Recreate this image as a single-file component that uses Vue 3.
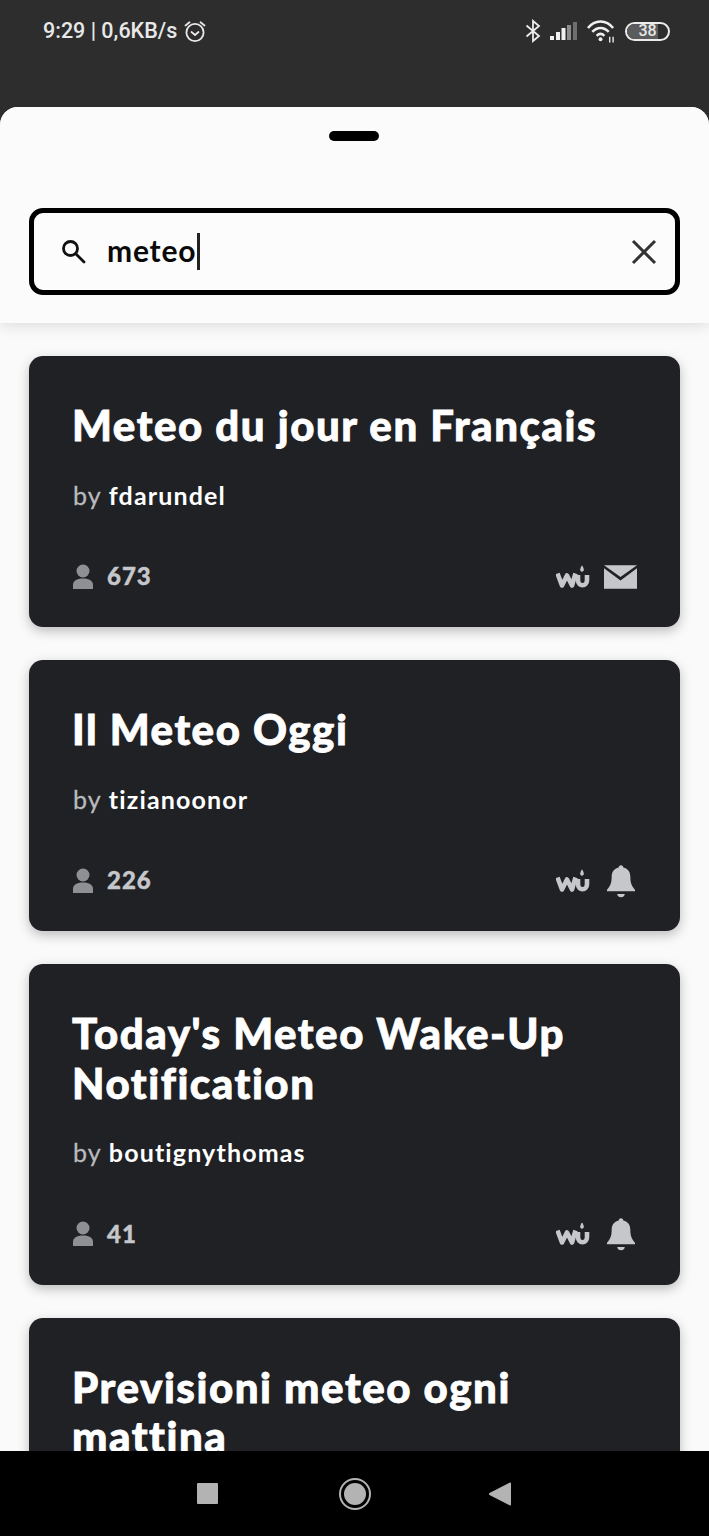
<script setup>
const cards = [
  { title: "Meteo du jour en Français", author: "fdarundel", users: 673, icon: "mail" },
  { title: "Il Meteo Oggi", author: "tizianoonor", users: 226, icon: "bell" },
  { title: "Today's Meteo Wake-Up Notification", author: "boutignythomas", users: 41, icon: "bell" },
  { title: "Previsioni meteo ogni mattina", author: "", users: 0, icon: "bell" }
]
</script>

<template>
  <div class="screen">
    <div class="status">
      <div class="status-left">
        <span>9:29 | 0,6KB/s</span>
        <svg class="alarm" width="24" height="24" viewBox="0 0 24 24" fill="none" stroke="#e8e8e8" stroke-width="1.8" stroke-linecap="round">
          <circle cx="12" cy="13.5" r="8.6" />
          <path d="M8.5 13l3.5 3 3.5-3" />
          <path d="M2.5 6.5l4-3.2M21.5 6.5l-4-3.2" />
        </svg>
      </div>
      <div class="status-right">
        <svg width="16" height="24" viewBox="0 0 16 24" fill="none" stroke="#ececec" stroke-width="1.8">
          <path d="M1.5 6.5L14 17l-6 5V2l6 5L1.5 17.5" />
        </svg>
        <svg class="signal" width="27" height="20" viewBox="0 0 27 20">
          <rect x="0" y="15" width="4" height="4" fill="#f0f0f0" />
          <rect x="6" y="11" width="4" height="8" fill="#f0f0f0" />
          <rect x="11.500" y="7" width="4" height="12" fill="#f0f0f0" />
          <rect x="17" y="4" width="4" height="15" fill="#8c8c8c" />
          <rect x="23" y="1" width="4" height="18" fill="#6e6e6e" />
        </svg>
        <svg class="wifi" width="29" height="24" viewBox="0 0 30 24" fill="none" stroke="#f0f0f0" stroke-width="2.6">
          <path d="M1 9C8-0 20-0 27 9" />
          <path d="M5.5 13C10.5 7.5 17.5 7.5 22.5 13" />
          <path d="M10 17c2.500-2.500 5.500-2.500 8 0" />
          <circle cx="14" cy="20.500" r="2" fill="#f0f0f0" stroke="none" />
          <path d="M23.500 18v6M27 18v6" stroke-width="1.400" />
        </svg>
        <div class="battery">
          <div class="battery-fill"></div>
          <span>38</span>
        </div>
      </div>
    </div>

    <div class="sheet">
      <div class="header">
        <div class="handle"></div>
        <div class="search">
          <svg width="28" height="28" viewBox="0 0 28 28" fill="none" stroke="#111" stroke-width="2.800" stroke-linecap="round">
            <circle cx="11.500" cy="10.500" r="7" />
            <path d="M17 16l8 8" />
          </svg>
          <span class="query">meteo</span>
          <span class="caret"></span>
          <svg class="clear" width="28" height="28" viewBox="0 0 28 28" fill="none" stroke="#333" stroke-width="3">
            <path d="M3 3l22 22M25 3L3 25" />
          </svg>
        </div>
      </div>

      <div class="list">
        <div v-for="card in cards" :key="card.title" class="card">
          <h2 class="title">{{ card.title }}</h2>
          <p class="by">by <b>{{ card.author }}</b></p>
          <div class="footer">
            <svg class="person" width="22" height="26" viewBox="0 0 22 26" fill="#8f9094">
              <circle cx="11" cy="7" r="6.500" />
              <path d="M1 25v-4c0-4 3.500-6.500 10-6.500s10 2.500 10 6.500v4z" />
            </svg>
            <span class="users">{{ card.users }}</span>
            <svg class="wu" width="34" height="24" viewBox="0 0 34 24" fill="none" stroke="#c6c7cb" stroke-width="4.600" stroke-linejoin="round">
              <path d="M1.500 8.500l4.500 12 5-10 5 10 3.500-12" />
              <path d="M22 10v5c0 7 9 7 9 0v-5" />
              <path d="M26 1.500c-1.500 3-1.500 4 0 4.500 1.500-.500 1.500-1.500 0-4.500z" stroke-width="1.500" fill="#c6c7cb" />
            </svg>
            <svg v-if="card.icon === 'mail'" class="kind mail" width="33" height="24" viewBox="0 0 34 24" fill="#c6c7cb">
              <path d="M0 1h34L17 13z" transform="translate(0 -1)" />
              <path d="M0 3v21h34V3L17 15.500z" />
            </svg>
            <svg v-else class="kind" width="28" height="34" viewBox="0 0 30 36" fill="#c6c7cb">
              <path d="M15 1c1.500 0 2.500 1 2.500 2.500 5 1 7.500 5 7.500 10 0 6 1 9.500 5 14v1.500H0v-1.500c4-4.500 5-8 5-14 0-5 2.500-9 7.500-10C12.500 2 13.500 1 15 1z" />
              <path d="M11 32h8c0 2-1.500 3.500-4 3.500s-4-1.500-4-3.500z" />
            </svg>
          </div>
        </div>
      </div>
    </div>

    <div class="nav">
      <div class="nav-square"></div>
      <div class="nav-home"><div></div></div>
      <svg class="nav-back" width="22" height="24" viewBox="0 0 22 24" fill="#b3b3b3">
        <path d="M21 .500c.500 0 1 .500 1 1v21c0 .500-.500 1-1 1L.500 13c-.700-.500-.700-1.500 0-2z" />
      </svg>
    </div>
  </div>
</template>

<style>
body {
  margin: 0;
}
</style>

<style scoped>
.screen {
  width: 709px;
  height: 1536px;
  display: flex;
  flex-direction: column;
  overflow: hidden;
  background: #2d2d2d;
  font-family: Lato, "Open Sans", sans-serif;
}

.status {
  height: 107px;
  flex-shrink: 0;
  box-sizing: border-box;
  padding: 17px 39px 0 43px;
  display: flex;
  justify-content: space-between;
  align-items: flex-start;
  color: #e8e8e8;
  font-family: Roboto, sans-serif;
  font-weight: 500;
  font-size: 21.500px;
  line-height: 28px;
}

.status-left,
.status-right {
  display: flex;
  align-items: center;
  height: 28px;
}

.alarm {
  margin-left: 6px;
}

.signal {
  margin-left: 9px;
}

.wifi {
  margin-left: 10px;
}

.battery {
  position: relative;
  margin-left: 9px;
  box-sizing: border-box;
  width: 45px;
  height: 19px;
  border: 2px solid #ececec;
  border-radius: 10px;
  overflow: hidden;
  display: flex;
  align-items: center;
  justify-content: center;
  font-size: 16px;
}

.battery span {
  position: relative;
}

.battery-fill {
  position: absolute;
  inset: 0 10px 0 0;
  background: #5c5c5c;
}

.sheet {
  flex: 1;
  min-height: 0;
  display: flex;
  flex-direction: column;
  background: #fafafa;
  border-radius: 18px 18px 0 0;
  overflow: hidden;
}

.header {
  height: 216px;
  flex-shrink: 0;
  box-sizing: border-box;
  padding: 24px 29px 0;
  background: #fbfbfb;
  box-shadow: 0 2px 14px rgba(0, 0, 0, 0.13);
  position: relative;
}

.handle {
  width: 50px;
  height: 10px;
  margin: 0 0 67px 300px;
  border-radius: 5px;
  background: #000;
}

.search {
  height: 87px;
  box-sizing: border-box;
  border: 5px solid #000;
  border-radius: 14px;
  display: flex;
  align-items: center;
  padding: 0 17px 0 25px;
  background: #fcfcfc;
}

.query {
  margin-left: 20px;
  margin-top: -4px;
  font-size: 30px;
  letter-spacing: 0.8px;
  font-weight: 700;
  color: #0a0a0a;
}

.caret {
  width: 3px;
  height: 37px;
  margin-left: 1px;
  background: #222;
}

.clear {
  margin-left: auto;
}

.list {
  flex: 1;
  min-height: 0;
  overflow: hidden;
  padding: 33px 29px 0;
  display: flex;
  flex-direction: column;
  gap: 33px;
}

.card {
  flex-shrink: 0;
  padding: 45px 44px 34.500px;
  background: #1f2125;
  border-radius: 14px;
  box-shadow: 0 4px 12px rgba(0, 0, 0, 0.25);
}

.title {
  margin: 0 0 0 -1px;
  font-size: 42px;
  line-height: 49.500px;
  font-weight: 900;
  letter-spacing: 1.550px;
  -webkit-text-stroke: 0.8px #fff;
  color: #fff;
}

.by {
  margin: 27px 0 0;
  font-size: 25px;
  line-height: 34px;
  font-weight: 400;
  letter-spacing: 1.150px;
  -webkit-text-stroke: 0.3px #b9babd;
  color: #b9babd;
}

.by b {
  color: #fff;
  font-weight: 700;
  -webkit-text-stroke: 0;
}

.footer {
  margin-top: 49px;
  height: 32px;
  display: flex;
  align-items: center;
}

.person {
  margin-left: -1px;
}

.users {
  margin-left: 13px;
  margin-top: -2px;
  font-size: 24px;
  font-weight: 900;
  letter-spacing: 1px;
  -webkit-text-stroke: 0.4px #c6c7cb;
  color: #c6c7cb;
}

.wu {
  margin-left: auto;
}

.kind {
  margin-left: 17px;
  margin-right: 1px;
}

.kind.mail {
  margin-left: 14px;
  margin-right: -1px;
}

.nav {
  height: 85px;
  flex-shrink: 0;
  background: #000;
  display: flex;
  align-items: center;
  padding-left: 197px;
}

.nav-square {
  width: 21px;
  height: 21px;
  background: #b3b3b3;
  border-radius: 1px;
}

.nav-home {
  width: 32px;
  height: 32px;
  margin-left: 121px;
  box-sizing: border-box;
  border: 2px solid #b3b3b3;
  border-radius: 50%;
  padding: 3px;
}

.nav-home div {
  width: 100%;
  height: 100%;
  border-radius: 50%;
  background: #b3b3b3;
}

.nav-back {
  margin-left: 118px;
}
</style>
